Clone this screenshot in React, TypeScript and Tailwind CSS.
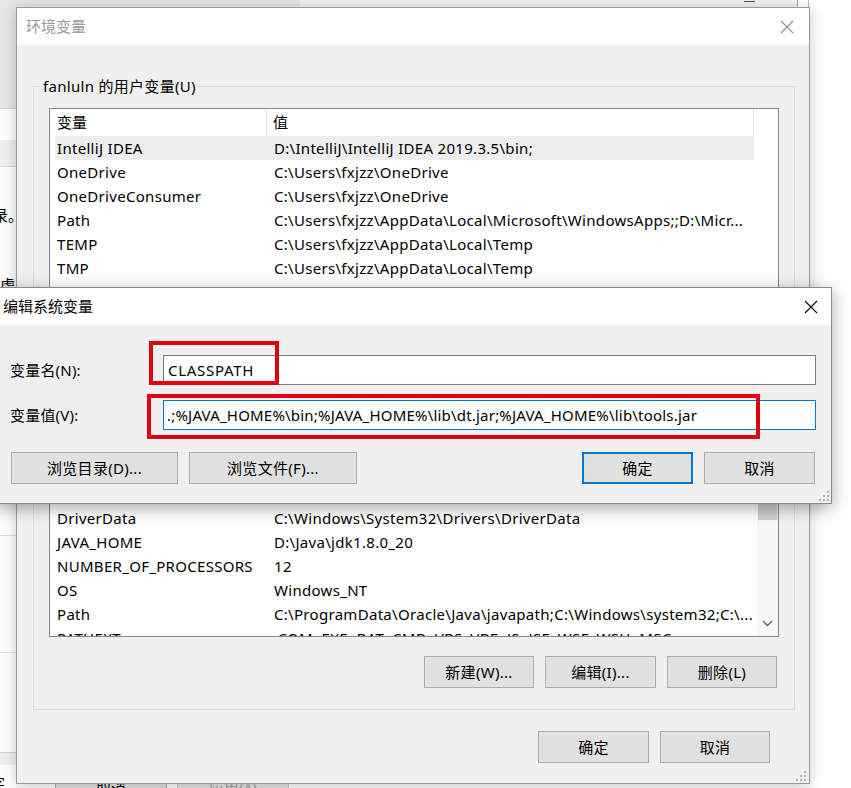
import React from "react";

const userVars: [string, string][] = [
  ["IntelliJ IDEA", "D:\\IntelliJ\\IntelliJ IDEA 2019.3.5\\bin;"],
  ["OneDrive", "C:\\Users\\fxjzz\\OneDrive"],
  ["OneDriveConsumer", "C:\\Users\\fxjzz\\OneDrive"],
  ["Path", "C:\\Users\\fxjzz\\AppData\\Local\\Microsoft\\WindowsApps;;D:\\Micr..."],
  ["TEMP", "C:\\Users\\fxjzz\\AppData\\Local\\Temp"],
  ["TMP", "C:\\Users\\fxjzz\\AppData\\Local\\Temp"],
  ["", ""],
];

const systemVars: [string, string][] = [
  ["CLASSPATH", ".;%JAVA_HOME%\\bin;%JAVA_HOME%\\lib\\dt.jar;%JAVA_HOME%\\lib\\to..."],
  ["ComSpec", "C:\\Windows\\system32\\cmd.exe"],
  ["DriverData", "C:\\Windows\\System32\\Drivers\\DriverData"],
  ["JAVA_HOME", "D:\\Java\\jdk1.8.0_20"],
  ["NUMBER_OF_PROCESSORS", "12"],
  ["OS", "Windows_NT"],
  ["Path", "C:\\ProgramData\\Oracle\\Java\\javapath;C:\\Windows\\system32;C:\\..."],
  ["PATHEXT", ".COM;.EXE;.BAT;.CMD;.VBS;.VBE;.JS;.JSE;.WSF;.WSH;.MSC"],
];

function CloseX({ color }: { color: string }) {
  return (
    <svg width="14" height="14" viewBox="0 0 14 14">
      <path d="M1 1L13 13M13 1L1 13" stroke={color} strokeWidth="1.1" />
    </svg>
  );
}

function Grip() {
  return (
    <svg width="10" height="10" viewBox="0 0 10 10" className="fill-[#b4b4b4]">
      <rect x="8" y="0" width="2" height="2" />
      <rect x="4" y="4" width="2" height="2" />
      <rect x="8" y="4" width="2" height="2" />
      <rect x="0" y="8" width="2" height="2" />
      <rect x="4" y="8" width="2" height="2" />
      <rect x="8" y="8" width="2" height="2" />
    </svg>
  );
}

function Btn({ children, w, focused }: { children: React.ReactNode; w: string; focused?: boolean }) {
  return (
    <div
      className={`${w} flex h-[32px] items-center justify-center bg-[#e1e1e1] text-[15px] leading-[20px] tracking-[0.3px] text-black ${
        focused ? "border-2 border-[#0078d7]" : "border border-[#adadad]"
      }`}
    >
      {children}
    </div>
  );
}

function VarList({
  rows,
  height,
  selected,
  scroll,
}: {
  rows: [string, string][];
  height: string;
  selected?: number;
  scroll?: boolean;
}) {
  return (
    <div className={`${height} flex w-[730px] overflow-hidden border border-[#828790] bg-white`}>
      <div className="flex-1 overflow-hidden">
        <div className="flex h-[27px] w-[704px] items-center border-r border-[#e5e5e5] text-[15px] text-black">
          <div className="flex h-full w-[217px] items-center border-r border-[#e5e5e5] pl-[7px]">变量</div>
          <div className="pl-[6px]">值</div>
        </div>
        {rows.map(([k, v], i) => (
          <div
            key={i}
            className={`ml-[5px] flex h-[24px] w-[699px] items-center whitespace-nowrap text-[15px] tracking-[0.3px] text-black ${
              i === selected ? "bg-[#eeeeee]" : ""
            }`}
          >
            <div className="w-[219px] shrink-0 pl-[2px]">{k}</div>
            <div className="overflow-hidden">{v}</div>
          </div>
        ))}
      </div>
      {scroll && (
        <div className="flex w-[21px] flex-col bg-[#f7f7f7]">
          <div className="ml-[1px] h-[89px] w-[19px] bg-[#cdcdcd]" />
          <div className="flex-1" />
          <div className="flex h-[21px] items-center justify-center pb-[4px]">
            <svg width="11" height="7" viewBox="0 0 11 7">
              <path d="M1 1L5.5 5.5L10 1" stroke="#606060" strokeWidth="1.3" fill="none" />
            </svg>
          </div>
        </div>
      )}
    </div>
  );
}

function EnvDialog() {
  return (
    <div className="absolute left-[16px] top-[7px] flex h-[777px] w-[794px] flex-col border border-[#9a9a9a] bg-[#f0f0f0] shadow-[0_2px_14px_rgba(0,0,0,0.22)]">
      <div className="flex h-[37px] shrink-0 items-center justify-between bg-white pl-[9px] pr-[15px]">
        <span className="text-[15px] text-[#999999]">环境变量</span>
        <CloseX color="#8c8c8c" />
      </div>
      <fieldset className="ml-[16px] mt-[31px] w-[761px] border border-[#dcdcdc] px-[15px] pb-[30px] pt-[12px]">
        <legend className="ml-[-7px] px-[1px] text-[15px] leading-[20px] tracking-[0.3px] text-black">
          fanluln 的用户变量(U)
        </legend>
        <VarList rows={userVars} height="h-[190px]" selected={0} />
        <div className="mr-[2px] mt-[19px] flex justify-end gap-[11px]">
          <Btn w="w-[110px]">新建(N)...</Btn>
          <Btn w="w-[110px]">编辑(E)...</Btn>
          <Btn w="w-[110px]">删除(D)</Btn>
        </div>
      </fieldset>
      <fieldset className="ml-[16px] mt-[18px] w-[761px] border border-[#dcdcdc] px-[15px] pb-[21px] pt-[12px]">
        <legend className="ml-[-7px] px-[1px] text-[15px] leading-[20px] text-black">系统变量(S)</legend>
        <VarList rows={systemVars} height="h-[207px]" scroll />
        <div className="mr-[2px] mt-[19px] flex justify-end gap-[11px]">
          <Btn w="w-[110px]">新建(W)...</Btn>
          <Btn w="w-[111px]">编辑(I)...</Btn>
          <Btn w="w-[110px]">删除(L)</Btn>
        </div>
      </fieldset>
      <div className="mr-[39px] mt-[21px] flex justify-end gap-[11px]">
        <Btn w="w-[111px]">确定</Btn>
        <Btn w="w-[110px]">取消</Btn>
      </div>
      <div className="mt-auto flex justify-end pb-[2px] pr-[3px]">
        <Grip />
      </div>
    </div>
  );
}

function EditDialog() {
  return (
    <div className="absolute left-[-8px] top-[287px] flex h-[217px] w-[840px] flex-col border border-[#8a8a8a] bg-[#f0f0f0] shadow-[0_4px_16px_rgba(0,0,0,0.35)]">
      <div className="flex h-[37px] shrink-0 items-center justify-between bg-white pl-[10px] pr-[13px]">
        <span className="text-[15px] text-black">编辑系统变量</span>
        <CloseX color="#000000" />
      </div>
      <div className="flex flex-col pl-[17px] pt-[30px]">
        <div className="flex items-center">
          <div className="w-[153px] text-[15px] tracking-[0.2px] text-black">变量名(N):</div>
          <div className="flex h-[30px] w-[653px] items-center border border-[#7a7a7a] bg-white pl-[4px] text-[15px] tracking-[0.7px] text-black">
            CLASSPATH
          </div>
        </div>
        <div className="mt-[15px] flex items-center">
          <div className="w-[153px] text-[15px] tracking-[0.2px] text-black">变量值(V):</div>
          <div className="flex h-[30px] w-[653px] items-center whitespace-nowrap border border-[#0078d7] bg-white pl-[3px] text-[15px] tracking-[0.2px] text-black">
            .;%JAVA_HOME%\bin;%JAVA_HOME%\lib\dt.jar;%JAVA_HOME%\lib\tools.jar
          </div>
        </div>
        <div className="mt-[22px] flex items-center pl-[1px]">
          <Btn w="w-[167px]">浏览目录(D)...</Btn>
          <div className="ml-[11px]">
            <Btn w="w-[168px]">浏览文件(F)...</Btn>
          </div>
          <div className="ml-[225px] flex gap-[11px]">
            <Btn w="w-[111px]" focused>
              确定
            </Btn>
            <Btn w="w-[111px]">取消</Btn>
          </div>
        </div>
      </div>
      <div className="mt-auto flex justify-end pb-[2px] pr-[2px]">
        <Grip />
      </div>
    </div>
  );
}

function BackWindows() {
  return (
    <>
      {/* window behind, right part of its title bar */}
      <div className="absolute left-[143px] top-0 flex h-[40px] w-[655px] justify-end border-r border-[#a0a0a0] bg-[#f2f2f2] pr-[42px] pt-[1px]">
        <div className="h-[1px] w-[11px] bg-[#555]" />
      </div>
      <div className="absolute left-[808px] top-0 h-[10px] w-[1px] bg-[#b0b0b0]" />
      {/* system properties window on the left */}
      <div className="absolute left-0 top-0 flex h-[788px] w-[300px] flex-col bg-white text-[15px] leading-[20px] text-black">
        <div className="h-[108px] shrink-0 bg-[#e6e6e6]" />
        <div className="h-[32px] shrink-0 border-t border-[#d9d9d9] bg-white" />
        <div className="h-[27px] shrink-0 border-b border-[#d9d9d9] bg-[#f0f0f0]" />
        <div className="flex h-[120px] shrink-0 flex-col">
          <div className="mt-[38px] flex w-[23px] justify-end whitespace-nowrap">
            要更改大部分设置，你必须作为管理员登录。
          </div>
          <div className="mt-[50px] flex w-[15px] justify-end whitespace-nowrap">处理器计划，内存使用，以及虚</div>
        </div>
        <div className="h-[248px] shrink-0" />
        <div className="h-[117px] shrink-0 border-t border-[#e0e0e0]" />
        <div className="h-[100px] shrink-0 border-t border-[#e0e0e0]" />
        <div className="h-[13px] shrink-0 border-t border-[#d9d9d9] bg-[#f0f0f0]" />
        <div className="relative flex h-[22px] shrink-0 gap-[10px] pl-[55px]">
          <div className="absolute left-[-10px] top-[8px] leading-[20px]">字</div>
          <div className="flex h-[32px] w-[112px] justify-center border border-[#adadad] bg-[#e1e1e1] pt-[12px]">取消</div>
          <div className="flex h-[32px] w-[112px] justify-center border border-[#cccccc] bg-[#e6e6e6] pt-[12px] text-[#a0a0a0]">
            应用(A)
          </div>
        </div>
      </div>
    </>
  );
}

export default function App() {
  return (
    <div className="relative h-[788px] w-[851px] overflow-hidden bg-white font-[family-name:Noto_Sans,Noto_Sans_CJK_SC,sans-serif]">
      <BackWindows />
      <EnvDialog />
      <EditDialog />
      {/* red annotation boxes */}
      <div className="absolute left-[149px] top-[341px] h-[44px] w-[130px] border-4 border-[#e3000f]" />
      <div className="absolute left-[147px] top-[394px] h-[45px] w-[613px] border-4 border-[#e3000f]" />
    </div>
  );
}
